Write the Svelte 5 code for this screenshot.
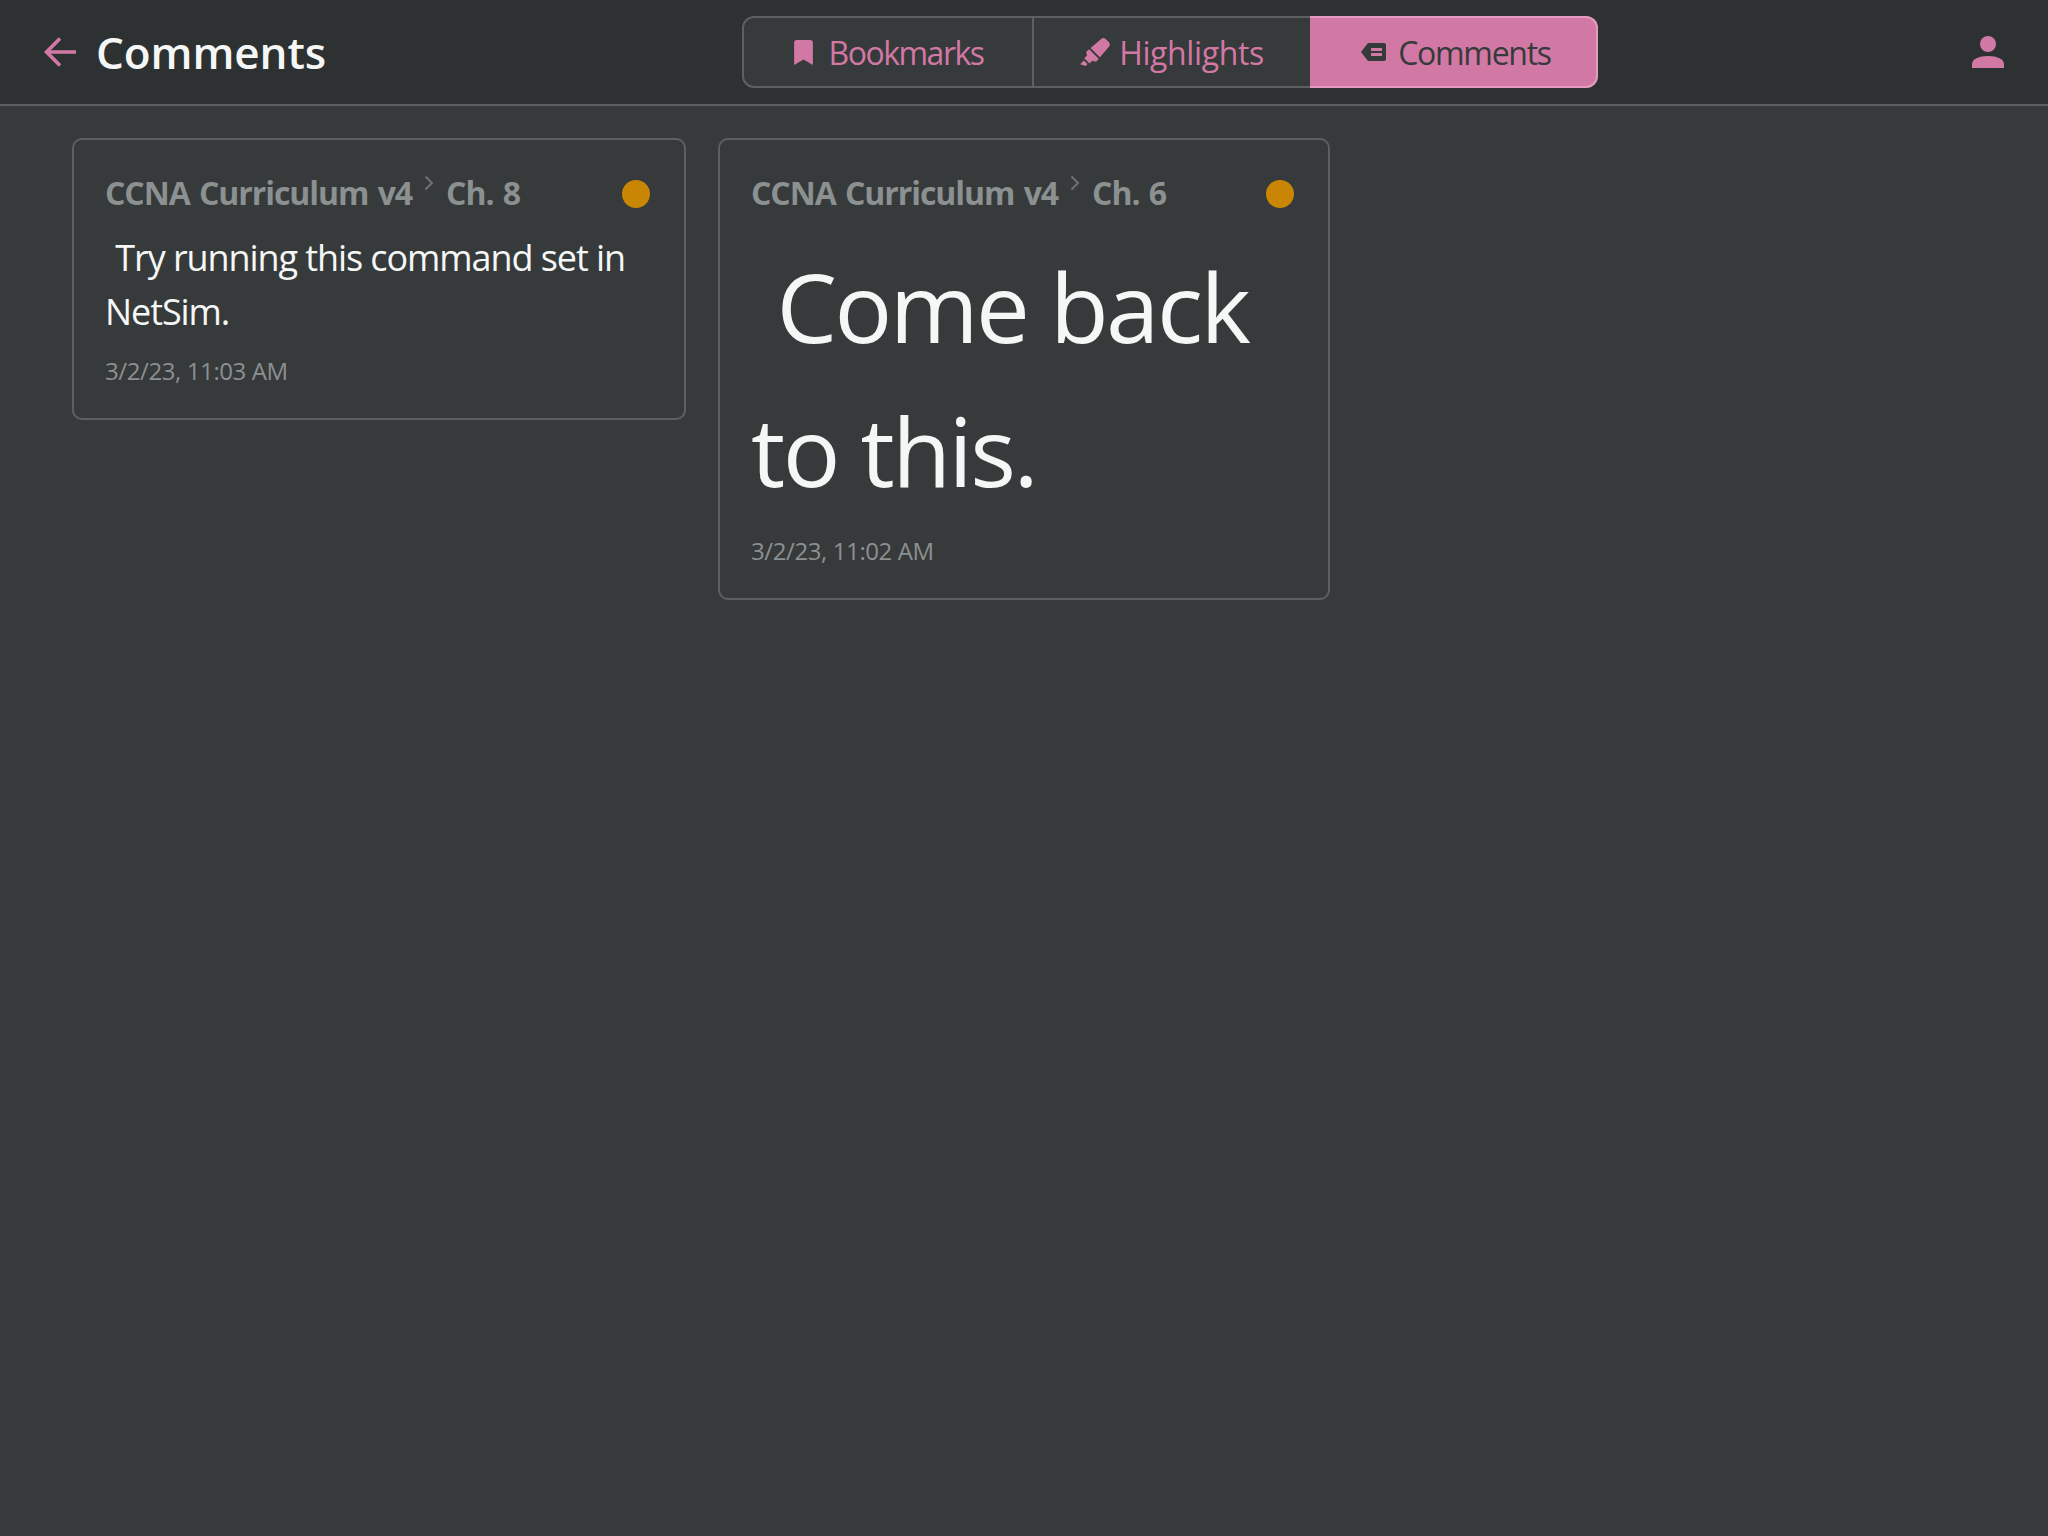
<script>
	const tabs = [
		{ label: 'Bookmarks', icon: 'bookmark' },
		{ label: 'Highlights', icon: 'pen' },
		{ label: 'Comments', icon: 'tag', active: true }
	];

	const comments = [
		{ chapter: 'Ch. 8', text: 'Try running this command set in NetSim.', time: '3/2/23, 11:03 AM' },
		{ chapter: 'Ch. 6', text: 'Come back to this.', time: '3/2/23, 11:02 AM', large: true }
	];
</script>

<div class="page">
	<header class="topbar">
		<div class="title-wrap">
			<svg class="back" viewBox="0 0 32 30" width="32" height="30" aria-hidden="true">
				<path d="M16 1.5 2.5 15 16 28.500M2.500 15H32" fill="none" stroke="currentColor" stroke-width="3.600" />
			</svg>
			<h1>Comments</h1>
		</div>

		<nav class="tabs">
			{#each tabs as tab}
				<button class="tab {tab.icon}" class:active={tab.active}>
					{#if tab.icon === 'bookmark'}
						<svg viewBox="0 0 384 512" width="19" height="25" aria-hidden="true">
							<path d="M0 512V48C0 21.490 21.490 0 48 0h288c26.510 0 48 21.490 48 48v464L192 400 0 512z" fill="currentColor" />
						</svg>
					{:else if tab.icon === 'pen'}
						<svg viewBox="0 0 544 512" width="30" height="28" aria-hidden="true">
							<path d="M0 479.980L99.920 512l35.450-35.450-67.040-67.040L0 479.980zm124.610-240.010a36.592 36.592 0 0 0-10.790 38.100l13.050 42.830-50.930 50.940 96.230 96.230 50.860-50.860 42.740 13.080c13.730 4.200 28.650-.010 38.150-10.780l35.550-41.640-173.340-173.340-41.520 35.640zm403.310-160.700l-63.200-63.200c-20.490-20.490-53.380-21.520-75.120-2.350L190.550 183.680l169.770 169.780L530.270 154.400c19.180-21.740 18.150-54.630-2.350-75.130z" fill="currentColor" />
						</svg>
					{:else}
						<svg viewBox="0 0 25 18" width="25" height="18" aria-hidden="true">
							<path fill-rule="evenodd" d="M7 0h16a2 2 0 0 1 2 2v14a2 2 0 0 1-2 2H7L0 9zM10 5v3h11V5zM10 10v3h11v-3z" fill="currentColor" />
						</svg>
					{/if}
					<span>{tab.label}</span>
				</button>
			{/each}
		</nav>

		<div class="user">
			<svg viewBox="0 0 32 32" width="32" height="32" aria-hidden="true">
				<circle cx="16" cy="8" r="8" fill="currentColor" />
				<path d="M0 32v-4c0-5 7-8 16-8s16 3 16 8v4z" fill="currentColor" />
			</svg>
		</div>
	</header>

	<main class="grid">
		{#each comments as item}
			<article class="card">
				<div class="meta">
					<div class="crumbs">
						<span>CCNA Curriculum v4</span>
						<svg class="chevron" viewBox="0 0 10 16" width="10" height="16" aria-hidden="true">
							<path d="M1.500 1.500l6.500 6.500-6.500 6.500" fill="none" stroke="currentColor" stroke-width="2" />
						</svg>
						<span>Ch. {item.chapter.slice(4)}</span>
					</div>
					<span class="dot"></span>
				</div>
				<p class="body" class:large={item.large}>&nbsp;{item.text}</p>
				<time>{item.time}</time>
			</article>
		{/each}
	</main>
</div>

<style>
	:global(body) {
		margin: 0;
		background: #373a3b;
	}

	.page {
		min-height: 1536px;
		background: #373a3b;
		font-family: 'Open Sans', 'Noto Sans', sans-serif;
		color: #f5f7f7;
	}

	.topbar {
		display: flex;
		align-items: center;
		height: 104px;
		background: #2e3132;
		border-bottom: 2px solid #5c6061;
	}

	.title-wrap {
		display: flex;
		align-items: center;
		gap: 20px;
		width: 698px;
		margin-left: 44px;
		color: #d278a5;
	}

	h1 {
		margin: 0;
		font-size: 44px;
		font-weight: 600;
		letter-spacing: -0.100px;
		color: #f5f7f7;
	}

	.tabs {
		display: flex;
		height: 72px;
		border: 2px solid #5c6061;
		border-radius: 12px;
		box-sizing: border-box;
		background: #373a3b;
	}

	.tab {
		display: flex;
		align-items: center;
		justify-content: center;
		gap: 12px;
		width: 288px;
		padding: 0;
		border: none;
		border-right: 2px solid #5c6061;
		background: none;
		color: #d278a5;
		font: inherit;
		font-size: 32px;
		letter-spacing: -1.300px;
	}

	.tab.bookmark {
		width: 290px;
		gap: 15px;
		padding-left: 2px;
		border-radius: 10px 0 0 10px;
		letter-spacing: -1.500px;
	}

	.tab.pen {
		width: 276px;
		gap: 9px;
		border-right: none;
		letter-spacing: -0.400px;
	}

	.tab.active {
		background: #d278a5;
		color: #373a3b;
		margin: -2px -2px -2px 0;
		padding-left: 6px;
		border: 2px solid #e59bc0;
		border-left: none;
		border-radius: 0 12px 12px 0;
	}

	.user {
		margin-left: auto;
		margin-right: 44px;
		display: flex;
		color: #d278a5;
	}

	.grid {
		display: grid;
		grid-template-columns: 614px 612px;
		align-items: start;
		gap: 32px;
		padding: 32px 72px;
	}

	.card {
		box-sizing: border-box;
		padding: 30px 32px 29px 31px;
		border: 2px solid #5c6061;
		border-radius: 10px;
	}

	.meta {
		display: flex;
		align-items: center;
		justify-content: space-between;
		height: 46px;
	}

	.crumbs {
		display: flex;
		align-items: flex-start;
		gap: 12px;
		font-size: 32px;
		font-weight: 700;
		letter-spacing: -1.050px;
		word-spacing: 2px;
		line-height: 44px;
		color: #8b9091;
	}

	.chevron {
		margin-top: 4px;
		color: #6d7172;
	}

	.dot {
		width: 28px;
		height: 28px;
		margin: 2px 2.500px 0 0;
		border-radius: 50%;
		background: #c98504;
	}

	.body {
		margin: 15px 0 14px;
		font-size: 36px;
		line-height: 54px;
		letter-spacing: -1.080px;
		text-indent: 2px;
	}

	.body.large {
		margin: 18px 0 11px;
		font-size: 96px;
		line-height: 144px;
		letter-spacing: -2.500px;
		text-indent: 3px;
	}

	time {
		display: block;
		font-size: 24px;
		line-height: 36px;
		letter-spacing: -0.400px;
		color: #8b9091;
	}
</style>
